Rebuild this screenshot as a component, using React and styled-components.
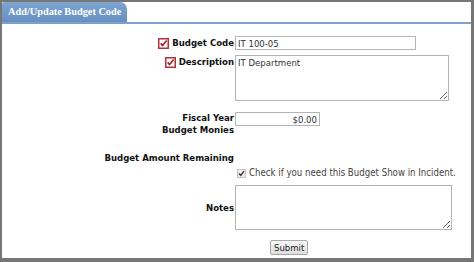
import React from "react";
import styled, { createGlobalStyle } from "styled-components";

const Global = createGlobalStyle`
  html, body { margin: 0; padding: 0; background: #ffffff; }
  body { width: 474px; height: 262px; overflow: hidden; }
  * { box-sizing: border-box; }
`;

const Frame = styled.div`
  width: 474px;
  height: 262px;
  border-style: solid;
  border-color: #767676;
  border-width: 2px 3px 4px 2px;
  background: #ffffff;
  display: flex;
  flex-direction: column;
`;

const TabBar = styled.div`
  height: 22px;
  display: flex;
  align-items: flex-end;
  border-bottom: 2px solid #7d9fc8;
  padding-top: 1px;
`;

const Tab = styled.div`
  height: 20px;
  padding: 0 6px 0 6px;
  background: linear-gradient(#7fa5d0, #6690c2);
  border-radius: 2px 7px 0 0;
  color: #ffffff;
  font-family: "Liberation Serif", "Times New Roman", serif;
  font-weight: bold;
  font-size: 10.3px;
  line-height: 20px;
  white-space: nowrap;
`;

const Form = styled.div`
  display: flex;
  flex-direction: column;
  padding-top: 12px;
  font-family: "DejaVu Sans Condensed", "DejaVu Sans", sans-serif;
`;

const Row = styled.div`
  display: grid;
  grid-template-columns: 233px 1fr;
  align-items: ${(p) => p.$align || "center"};
  margin-top: ${(p) => p.$mt || 0}px;
`;

const Label = styled.div`
  display: flex;
  justify-content: flex-end;
  align-items: center;
  gap: 3px;
  padding-right: 1px;
  padding-top: ${(p) => p.$pt || 0}px;
  font-size: 9.5px;
  font-weight: bold;
  color: #111111;
  text-align: right;
  line-height: 12px;
  white-space: nowrap;
`;

const TextInput = styled.input`
  width: ${(p) => p.$w}px;
  height: 14px;
  border: 1px solid #b4b4b4;
  padding: 0 2px;
  margin: 0;
  font-family: "DejaVu Sans Condensed", "DejaVu Sans", sans-serif;
  font-size: 9.5px;
  color: #333333;
  text-align: ${(p) => p.$align || "left"};
  outline: none;
  background: #ffffff;
`;

const TextArea = styled.textarea`
  width: ${(p) => p.$w}px;
  height: ${(p) => p.$h}px;
  border: 1px solid #b4b4b4;
  padding: 1px 2px;
  margin: 0;
  display: block;
  font-family: "DejaVu Sans Condensed", "DejaVu Sans", sans-serif;
  font-size: 9.5px;
  line-height: 11px;
  color: #333333;
  outline: none;
  resize: both;
`;

const RequiredBox = styled.svg`
  width: 11px;
  height: 11px;
  flex: none;
  display: block;
`;

const Required = () => (
  <RequiredBox viewBox="0 0 11 11">
    <rect x="0.75" y="0.75" width="9.5" height="9.5" fill="#ffffff" stroke="#b0303a" strokeWidth="1.5" />
    <path d="M2.6 5.4 L4.6 7.6 L8.6 2.4" fill="none" stroke="#a02030" strokeWidth="1.6" />
  </RequiredBox>
);

const CheckLine = styled.label`
  display: flex;
  align-items: center;
  gap: 3px;
  padding-left: 2px;
  font-size: 9.6px;
  line-height: 12px;
  color: #444444;
  white-space: nowrap;
`;

const SmallBox = styled.svg`
  width: 9px;
  height: 9px;
  display: block;
  flex: none;
`;

const SmallCheck = () => (
  <SmallBox viewBox="0 0 9 9">
    <rect x="0.5" y="0.5" width="8" height="8" fill="#eeeeee" stroke="#c4c4c4" />
    <path d="M2 4.5 L3.8 6.5 L7 2.2" fill="none" stroke="#333333" strokeWidth="1.4" />
  </SmallBox>
);

const SubmitCell = styled.div`
  display: flex;
  padding-left: 35px;
`;

const Button = styled.button`
  height: 15px;
  padding: 0 3px;
  margin: 0;
  border: 1px solid #a8a8a8;
  border-radius: 2px;
  background: linear-gradient(#f6f6f6, #dedede);
  font-family: "DejaVu Sans Condensed", "DejaVu Sans", sans-serif;
  font-size: 9.5px;
  color: #222222;
  line-height: 13px;
`;

export default function App() {
  return (
    <>
      <Global />
      <Frame>
        <TabBar>
          <Tab>Add/Update Budget Code</Tab>
        </TabBar>
        <Form>
          <Row>
            <Label>
              <Required />
              Budget Code
            </Label>
            <TextInput $w={181} defaultValue="IT 100-05" />
          </Row>
          <Row $mt={5} $align="start">
            <Label $pt={1}>
              <Required />
              Description
            </Label>
            <TextArea $w={214} $h={46} defaultValue="IT Department" />
          </Row>
          <Row $mt={11} $align="start">
            <Label>
              <span>
                Fiscal Year
                <br />
                Budget Monies
              </span>
            </Label>
            <TextInput $w={85} $align="right" defaultValue="$0.00" />
          </Row>
          <Row $mt={16}>
            <Label>Budget Amount Remaining</Label>
            <div />
          </Row>
          <Row $mt={3}>
            <div />
            <CheckLine>
              <SmallCheck />
              Check if you need this Budget Show in Incident.
            </CheckLine>
          </Row>
          <Row $mt={6}>
            <Label>Notes</Label>
            <TextArea $w={217} $h={45} />
          </Row>
          <Row $mt={10}>
            <div />
            <SubmitCell>
              <Button type="button">Submit</Button>
            </SubmitCell>
          </Row>
        </Form>
      </Frame>
    </>
  );
}
